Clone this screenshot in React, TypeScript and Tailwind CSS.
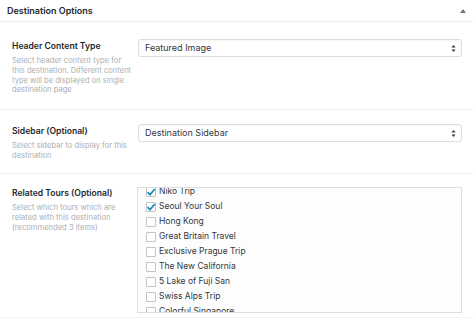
import React from "react";

const tours = [
  { name: "Niko Trip", checked: true },
  { name: "Seoul Your Soul", checked: true },
  { name: "Hong Kong", checked: false },
  { name: "Great Britain Travel", checked: false },
  { name: "Exclusive Prague Trip", checked: false },
  { name: "The New California", checked: false },
  { name: "5 Lake of Fuji San", checked: false },
  { name: "Swiss Alps Trip", checked: false },
  { name: "Colorful Singapore", checked: false },
];

function UpDown() {
  return (
    <svg width="5" height="9" viewBox="0 0 5 9" className="shrink-0">
      <path d="M2.5 1 L4.5 3.6 L0.5 3.6 Z" fill="#32373c" />
      <path d="M2.5 8 L4.5 5.4 L0.5 5.4 Z" fill="#32373c" />
    </svg>
  );
}

function Select({ value }: { value: string }) {
  return (
    <div className="flex h-[18px] w-[324px] items-center justify-between rounded-[3px] border border-[#dddddd] bg-white pl-[6px] pr-[5px] text-[9px] text-[#32373c] shadow-[inset_0_1px_2px_rgba(0,0,0,0.04)]">
      <span>{value}</span>
      <UpDown />
    </div>
  );
}

function Label({ title, lines }: { title: string; lines: string[] }) {
  return (
    <div className="w-[126px] shrink-0">
      <div className="text-[8.6px] font-semibold leading-[14px] text-[#23282d]">{title}</div>
      <div className="mt-[3px] text-[7.6px] leading-[9.8px] text-[#abafb4]">
        {lines.map((l) => (
          <div key={l} className="whitespace-nowrap">
            {l}
          </div>
        ))}
      </div>
    </div>
  );
}

export default function App() {
  return (
    <div
      className="h-[326px] w-[474px] overflow-hidden bg-white"
      style={{ fontFamily: "Inter, 'Noto Sans', sans-serif" }}
    >
      <div className="flex h-[22px] items-center justify-between border-b border-[#eeeeee] pl-[7px] pr-[8px]">
        <span className="text-[9px] font-semibold text-[#23282d]">Destination Options</span>
        <svg width="6" height="4" viewBox="0 0 6 4">
          <path d="M3 0 L6 4 L0 4 Z" fill="#72777c" />
        </svg>
      </div>

      <div className="flex h-[88px] border-b border-[#efefef] pl-[12px] pt-[17px]">
        <Label
          title="Header Content Type"
          lines={[
            "Select header content type for",
            "this destination. Different content",
            "type will be displayed on single",
            "destination page",
          ]}
        />
        <div>
          <Select value="Featured Image" />
        </div>
      </div>

      <div className="flex h-[64px] border-b border-[#efefef] pl-[12px] pt-[14px]">
        <Label title="Sidebar (Optional)" lines={["Select sidebar to display for this", "destination"]} />
        <div>
          <Select value="Destination Sidebar" />
        </div>
      </div>

      <div className="flex h-[144px] border-b border-[#f3f3f3] pl-[12px] pt-[12px]">
        <Label
          title="Related Tours (Optional)"
          lines={["Select which tours which are", "related with this destination", "(recommended 3 items)"]}
        />
        <div className="-ml-[1px] mt-[1px] h-[126px] w-[325px] overflow-hidden border border-[#dddddd] bg-[#fdfdfd]">
          <div className="-mt-[4px] pl-[8px]">
            {tours.map((t) => (
              <div key={t.name} className="flex h-[15px] items-center gap-[3px]">
                <div className="relative h-[10px] w-[10px] shrink-0 rounded-[1px] border border-[#c4c4c4] bg-white">
                  {t.checked && (
                    <svg
                      width="12"
                      height="12"
                      viewBox="0 0 12 12"
                      className="absolute -left-[2px] -top-[2px]"
                    >
                      <path
                        d="M2.5 6.2 L5 8.6 L9.8 3"
                        fill="none"
                        stroke="#1e8cbe"
                        strokeWidth="1.8"
                      />
                    </svg>
                  )}
                </div>
                <span className="text-[8.5px] leading-[15px] text-[#32373c]">{t.name}</span>
              </div>
            ))}
          </div>
        </div>
      </div>
    </div>
  );
}
